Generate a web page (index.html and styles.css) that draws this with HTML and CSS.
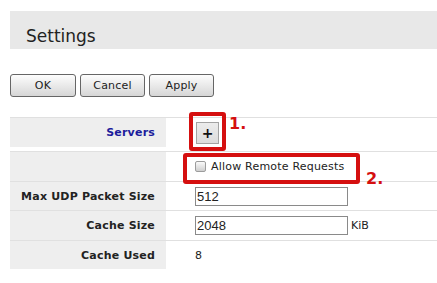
FILE: index.html
```html
<!DOCTYPE html>
<html lang="en">
<head>
  <meta charset="UTF-8">
  <title>Settings</title>
  <link rel="stylesheet" href="styles.css">
</head>
<body>

<div class="page">
  <h1 class="title">Settings</h1>

  <div class="actions">
    <button class="btn btn-ok">OK</button>
    <button class="btn">Cancel</button>
    <button class="btn">Apply</button>
  </div>

  <div class="form">
    <div class="row row-servers">
      <div class="label link">Servers</div>
      <div class="value">
        <button class="add">+</button>
        <span class="mark mark-1"></span>
        <span class="mark-num num-1">1.</span>
      </div>
    </div>

    <div class="row">
      <div class="label"></div>
      <div class="value">
        <label class="check"><input type="checkbox"> Allow Remote Requests</label>
        <span class="mark mark-2"></span>
        <span class="mark-num num-2">2.</span>
      </div>
    </div>

    <div class="row compact">
      <div class="label">Max UDP Packet Size</div>
      <div class="value">
        <input class="field" type="text" value="512">
      </div>
    </div>

    <div class="row">
      <div class="label">Cache Size</div>
      <div class="value">
        <input class="field" type="text" value="2048">
        <span class="unit">KiB</span>
      </div>
    </div>

    <div class="row compact">
      <div class="label">Cache Used</div>
      <div class="value">8</div>
    </div>
  </div>
</div>

</body>
</html>
```

FILE: styles.css
```css
body {
  margin: 0;
  font-family: 'DejaVu Sans', sans-serif;
  color: #222;
  background: #fff;
}

.page {
  padding: 11px 0 0 10px;
}

.title {
  margin: 0;
  height: 38px;
  box-sizing: border-box;
  padding: 15px 0 0 16px;
  font-size: 17px;
  font-weight: normal;
  line-height: 20px;
  background: #e8e8e8;
}

.actions {
  display: flex;
  gap: 4px;
  margin-top: 25px;
}

.btn {
  width: 65px;
  height: 23px;
  padding: 0;
  border: 1px solid #666;
  border-radius: 3px;
  background: linear-gradient(#fdfdfd, #d6d6d6);
  font-family: 'DejaVu Sans', sans-serif;
  font-size: 11px;
  letter-spacing: 0.2px;
  color: #222;
}

.btn-ok {
  width: 66px;
}

.form {
  margin-top: 20px;
}

.row {
  display: grid;
  grid-template-columns: 156px 1fr;
  grid-template-rows: 29px;
  border-top: 1px solid #e0e0e0;
}

.row.compact {
  grid-template-rows: 28px;
}

.row-servers {
  padding-bottom: 4px;
}

.label {
  display: flex;
  align-items: center;
  justify-content: flex-end;
  padding-right: 11px;
  background: #eeeeee;
  font-size: 11px;
  font-weight: bold;
  letter-spacing: 0.2px;
  color: #222;
}

.label.link {
  color: #1c1c9c;
}

.value {
  position: relative;
  display: flex;
  align-items: center;
  padding-left: 29px;
  font-size: 11px;
}

.add {
  width: 23px;
  height: 22px;
  margin-left: 1px;
  padding: 0;
  border: 1px solid #a3a3a3;
  background: linear-gradient(#ececec, #dcdcdc);
  font-family: 'DejaVu Sans', sans-serif;
  font-size: 14px;
  font-weight: bold;
  line-height: 20px;
  color: #111;
}

.check {
  display: flex;
  align-items: center;
  letter-spacing: 0.2px;
}

.check input {
  appearance: none;
  width: 11px;
  height: 11px;
  margin: 0 5px 0 0;
  border: 1px solid #9c9c9c;
  border-radius: 2px;
  background: linear-gradient(#fafafa, #cfcfcf);
}

.field {
  width: 153px;
  height: 19px;
  box-sizing: border-box;
  margin: 0;
  padding: 0 1px;
  border: 1px solid #8a8a8a;
  font-family: 'Liberation Sans', sans-serif;
  font-size: 13px;
  color: #222;
}

.unit {
  margin-left: 3px;
}

/* red annotation boxes */
.mark {
  position: absolute;
  box-sizing: border-box;
  border: 4px solid #d50f0f;
  border-radius: 3px;
}

.mark-1 {
  left: 23px;
  top: -6px;
  width: 37px;
  height: 39px;
}

.mark-2 {
  left: 17px;
  top: 1px;
  width: 177px;
  height: 31px;
}

.mark-num {
  position: absolute;
  font-size: 16px;
  font-weight: bold;
  line-height: 16px;
  color: #d50f0f;
}

.num-1 {
  left: 63px;
  top: -2px;
}

.num-2 {
  left: 200px;
  top: 19px;
}
```
